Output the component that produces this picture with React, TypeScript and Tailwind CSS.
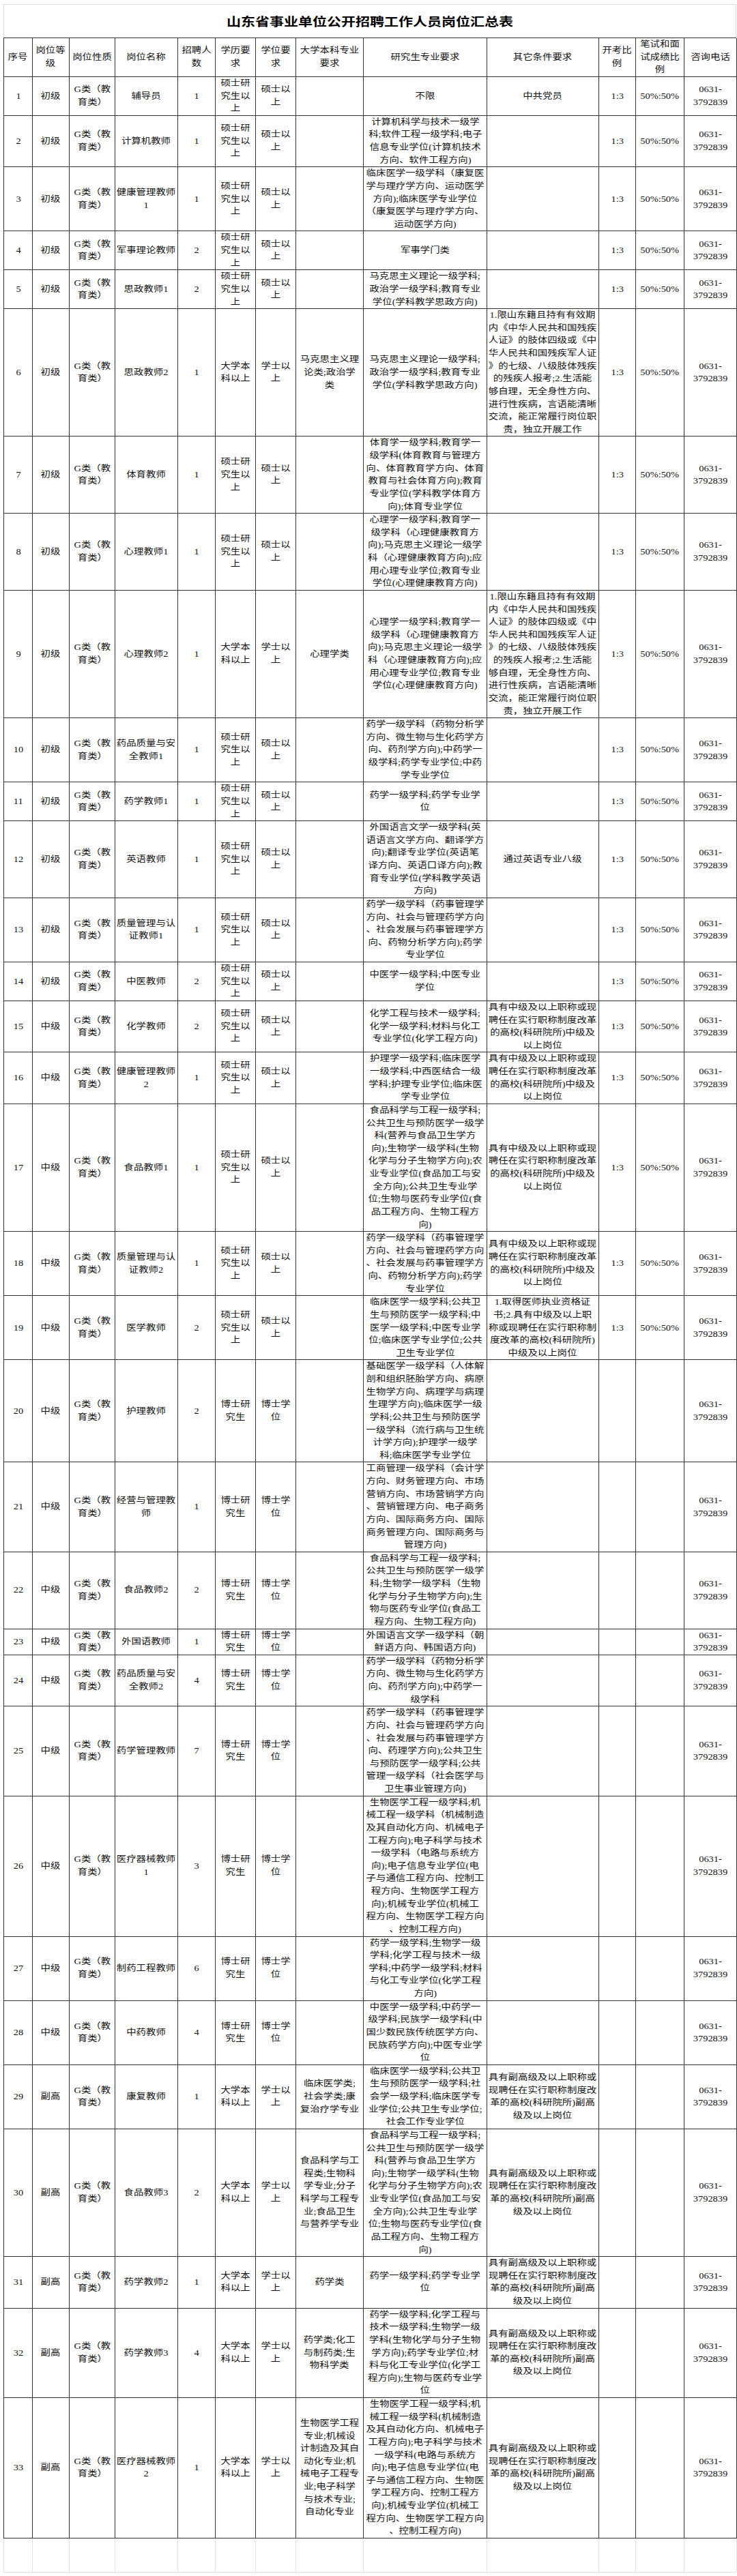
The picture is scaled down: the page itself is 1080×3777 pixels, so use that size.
import React from 'react';

// 每行单元格里的换行用 | 分隔
const G = 'G类（教|育类）';
const MS = '硕士研|究生以|上';
const MD = '硕士以|上';
const BS = '大学本|科以上';
const BD = '学士以|上';
const DS = '博士研|究生';
const DD = '博士学|位';
const PHONE = '0631-|3792839';

const MID = '具有中级及以上职称或现|聘任在实行职称制度改革|的高校(科研院所)中级及|以上岗位';
const SEN = '具有副高级及以上职称或|现聘任在实行职称制度改|革的高校(科研院所)副高|级及以上岗位';
const DIS =
  '1.限山东籍且持有有效期|内《中华人民共和国残疾|人证》的肢体四级或《中|华人民共和国残疾军人证|》的七级、八级肢体残疾|的残疾人报考;2.生活能|够自理，无全身性方向、|进行性疾病，言语能清晰|交流，能正常履行岗位职|责，独立开展工作';

const SZ = '马克思主义理论一级学科;|政治学一级学科;教育专业|学位(学科教学思政方向)';
const XL = '心理学一级学科;教育学一|级学科（心理健康教育方|向);马克思主义理论一级学|科（心理健康教育方向);应|用心理专业学位;教育专业|学位(心理健康教育方向)';
const YPAQ = '药学一级学科（药物分析学|方向、微生物与生化药学方|向、药剂学方向);中药学一';
const ZLGL = '药学一级学科（药事管理学|方向、社会与管理药学方向|、社会发展与药事管理学方|向、药物分析学方向);药学|专业学位';
const SP = '食品科学与工程一级学科;|公共卫生与预防医学一级学|科(营养与食品卫生学方|向);生物学一级学科(生物|化学与分子生物学方向);农|业专业学位(食品加工与安|全方向);公共卫生专业学|位;生物与医药专业学位(食|品工程方向、生物工程方|向)';
const YX = '药学一级学科;药学专业学|位';

const headers = [
  '序号',
  '岗位等|级',
  '岗位性质',
  '岗位名称',
  '招聘人|数',
  '学历要|求',
  '学位要|求',
  '大学本科专业|要求',
  '研究生专业要求',
  '其它条件要求',
  '开考比|例',
  '笔试和面|试成绩比|例',
  '咨询电话',
];

type Row = [string, string, string, string, string, string, string, string, string, boolean];

// 序号, 等级, 名称, 人数, 学历, 学位, 本科专业, 研究生专业, 其它条件, 是否有开考比例
const rows: Row[] = [
  ['1', '初级', '辅导员', '1', MS, MD, '', '不限', '中共党员', true],
  ['2', '初级', '计算机教师', '1', MS, MD, '', '计算机科学与技术一级学|科;软件工程一级学科;电子|信息专业学位(计算机技术|方向、软件工程方向)', '', true],
  ['3', '初级', '健康管理教师|1', '1', MS, MD, '', '临床医学一级学科（康复医|学与理疗学方向、运动医学|方向);临床医学专业学位|（康复医学与理疗学方向、|运动医学方向)', '', true],
  ['4', '初级', '军事理论教师', '2', MS, MD, '', '军事学门类', '', true],
  ['5', '初级', '思政教师1', '2', MS, MD, '', SZ, '', true],
  ['6', '初级', '思政教师2', '1', BS, BD, '马克思主义理|论类;政治学|类', SZ, DIS, true],
  ['7', '初级', '体育教师', '1', MS, MD, '', '体育学一级学科;教育学一|级学科(体育教育与管理方|向、体育教育学方向、体育|教育与社会体育方向);教育|专业学位(学科教学体育方|向);体育专业学位', '', true],
  ['8', '初级', '心理教师1', '1', MS, MD, '', XL, '', true],
  ['9', '初级', '心理教师2', '1', BS, BD, '心理学类', XL, DIS, true],
  ['10', '初级', '药品质量与安|全教师1', '1', MS, MD, '', YPAQ + '|级学科;药学专业学位;中药|学专业学位', '', true],
  ['11', '初级', '药学教师1', '1', MS, MD, '', YX, '', true],
  ['12', '初级', '英语教师', '1', MS, MD, '', '外国语言文学一级学科(英|语语言文学方向、翻译学方|向);翻译专业学位(英语笔|译方向、英语口译方向);教|育专业学位(学科教学英语|方向)', '通过英语专业八级', true],
  ['13', '初级', '质量管理与认|证教师1', '1', MS, MD, '', ZLGL, '', true],
  ['14', '初级', '中医教师', '2', MS, MD, '', '中医学一级学科;中医专业|学位', '', true],
  ['15', '中级', '化学教师', '2', MS, MD, '', '化学工程与技术一级学科;|化学一级学科;材料与化工|专业学位(化学工程方向)', MID, true],
  ['16', '中级', '健康管理教师|2', '1', MS, MD, '', '护理学一级学科;临床医学|一级学科;中西医结合一级|学科;护理专业学位;临床医|学专业学位', MID, true],
  ['17', '中级', '食品教师1', '1', MS, MD, '', SP, MID, true],
  ['18', '中级', '质量管理与认|证教师2', '1', MS, MD, '', ZLGL, MID, true],
  ['19', '中级', '医学教师', '2', MS, MD, '', '临床医学一级学科;公共卫|生与预防医学一级学科;中|医学一级学科;中医专业学|位;临床医学专业学位;公共|卫生专业学位', '1.取得医师执业资格证|书;2.具有中级及以上职|称或现聘任在实行职称制|度改革的高校(科研院所)|中级及以上岗位', true],
  ['20', '中级', '护理教师', '2', DS, DD, '', '基础医学一级学科（人体解|剖和组织胚胎学方向、病原|生物学方向、病理学与病理|生理学方向);临床医学一级|学科;公共卫生与预防医学|一级学科（流行病与卫生统|计学方向);护理学一级学|科;临床医学专业学位', '', false],
  ['21', '中级', '经营与管理教|师', '1', DS, DD, '', '工商管理一级学科（会计学|方向、财务管理方向、市场|营销方向、市场营销学方向|、营销管理方向、电子商务|方向、国际商务方向、国际|商务管理方向、国际商务与|管理方向)', '', false],
  ['22', '中级', '食品教师2', '2', DS, DD, '', '食品科学与工程一级学科;|公共卫生与预防医学一级学|科;生物学一级学科（生物|化学与分子生物学方向);生|物与医药专业学位(食品工|程方向、生物工程方向)', '', false],
  ['23', '中级', '外国语教师', '1', DS, DD, '', '外国语言文学一级学科（朝|鲜语方向、韩国语方向)', '', false],
  ['24', '中级', '药品质量与安|全教师2', '4', DS, DD, '', YPAQ + '|级学科', '', false],
  ['25', '中级', '药学管理教师', '7', DS, DD, '', '药学一级学科（药事管理学|方向、社会与管理药学方向|、社会发展与药事管理学方|向、药理学方向);公共卫生|与预防医学一级学科;公共|管理一级学科（社会医学与|卫生事业管理方向)', '', false],
  ['26', '中级', '医疗器械教师|1', '3', DS, DD, '', '生物医学工程一级学科;机|械工程一级学科（机械制造|及其自动化方向、机械电子|工程方向);电子科学与技术|一级学科（电路与系统方|向);电子信息专业学位(电|子与通信工程方向、控制工|程方向、生物医学工程方|向);机械专业学位(机械工|程方向、生物医学工程方向|、控制工程方向)', '', false],
  ['27', '中级', '制药工程教师', '6', DS, DD, '', '药学一级学科;生物学一级|学科;化学工程与技术一级|学科;中药学一级学科;材料|与化工专业学位(化学工程|方向)', '', false],
  ['28', '中级', '中药教师', '4', DS, DD, '', '中医学一级学科;中药学一|级学科;民族学一级学科(中|国少数民族传统医学方向、|民族药学方向);中医专业学|位', '', false],
  ['29', '副高', '康复教师', '1', BS, BD, '临床医学类;|社会学类;康|复治疗学专业', '临床医学一级学科;公共卫|生与预防医学一级学科;社|会学一级学科;临床医学专|业学位;公共卫生专业学位;|社会工作专业学位', SEN, false],
  ['30', '副高', '食品教师3', '2', BS, BD, '食品科学与工|程类;生物科|学专业;分子|科学与工程专|业;食品卫生|与营养学专业', SP, SEN, false],
  ['31', '副高', '药学教师2', '1', BS, BD, '药学类', YX, SEN, false],
  ['32', '副高', '药学教师3', '4', BS, BD, '药学类;化工|与制药类;生|物科学类', '药学一级学科;化学工程与|技术一级学科;生物学一级|学科(生物化学与分子生物|学方向);药学专业学位;材|料与化工专业学位(化学工|程方向);生物与医药专业学|位', SEN, false],
  ['33', '副高', '医疗器械教师|2', '1', BS, BD, '生物医学工程|专业;机械设|计制造及其自|动化专业;机|械电子工程专|业;电子科学|与技术专业;|自动化专业', '生物医学工程一级学科;机|械工程一级学科(机械制造|及其自动化方向、机械电子|工程方向);电子科学与技术|一级学科(电路与系统方|向);电子信息专业学位(电|子与通信工程方向、生物医|学工程方向、控制工程方|向);机械专业学位(机械工|程方向、生物医学工程方向|、控制工程方向)', SEN, false],
];

const gridCols =
  'grid grid-cols-[42px_54px_67px_92px_55px_59px_59px_99px_181px_164px_54px_71px_77px]';

const Cell: React.FC<{ text: string }> = ({ text }) => (
  <div className="flex items-center justify-center border-r border-b border-[#333]">
    <div className="scale-x-120 whitespace-nowrap text-center">
      {text.split('|').map((line, i) => (
        <div key={i}>{line}</div>
      ))}
    </div>
  </div>
);

export default function App() {
  return (
    <div className="w-[1080px] min-h-[3777px] bg-white pt-[6px] pl-[5px] text-[12px] leading-[18.63px] text-[#111] font-['Liberation_Serif','Noto_Sans_CJK_SC',serif]">
      <div className="w-[1074px]">
        <div className="h-[49px] flex items-center justify-center border-l border-r border-t border-[#dcdcdc]">
          <h1 className="scale-x-120 text-[17.5px] font-bold text-black font-['Noto_Sans_CJK_SC',sans-serif]">
            山东省事业单位公开招聘工作人员岗位汇总表
          </h1>
        </div>

        <div className={`${gridCols} border-l border-t border-[#333]`}>
          {headers.map((h) => (
            <Cell key={h} text={h} />
          ))}
          {rows.map((r) => (
            <React.Fragment key={r[0]}>
              <Cell text={r[0]} />
              <Cell text={r[1]} />
              <Cell text={G} />
              <Cell text={r[2]} />
              <Cell text={r[3]} />
              <Cell text={r[4]} />
              <Cell text={r[5]} />
              <Cell text={r[6]} />
              <Cell text={r[7]} />
              <Cell text={r[8]} />
              <Cell text={r[9] ? '1:3' : ''} />
              <Cell text={r[9] ? '50%:50%' : ''} />
              <Cell text={PHONE} />
            </React.Fragment>
          ))}
        </div>

        <div className={`${gridCols} h-[50px] border-l border-b border-[#e2e2e2]`}>
          {headers.map((h) => (
            <div key={h} className="border-r border-[#e2e2e2]" />
          ))}
        </div>
      </div>
    </div>
  );
}
